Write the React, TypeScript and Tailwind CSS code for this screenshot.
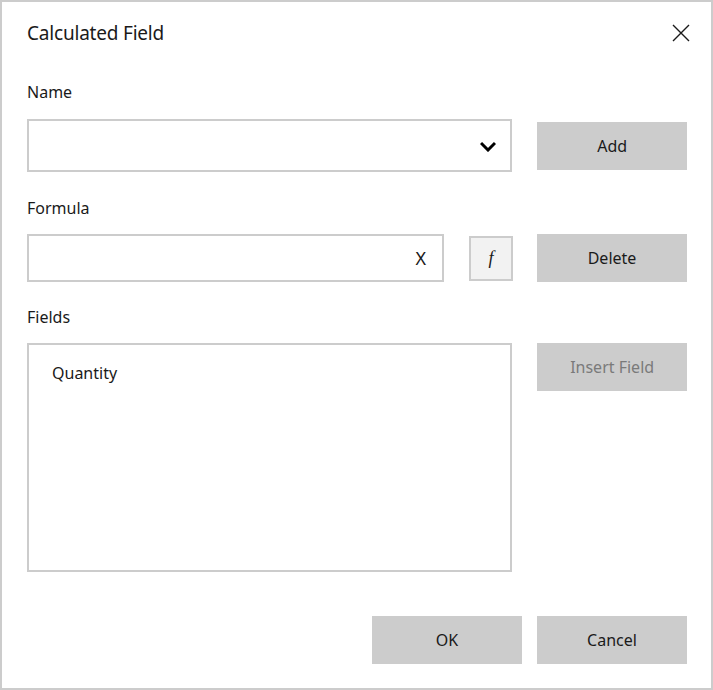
export default function App() {
  const btn =
    "w-[150px] h-[48px] bg-[#cccccc] flex items-center justify-center text-[16px] text-[#1a1a1a]";
  return (
    <div
      className="w-[713px] h-[690px] border-2 border-[#cccccc] bg-white text-[#1a1a1a] flex flex-col"
      style={{ fontFamily: '"Noto Sans", "Open Sans", sans-serif' }}
    >
      {/* Header */}
      <div className="flex items-center justify-between pl-[25px] pr-[20px] h-[62px]">
        <span className="text-[19px] tracking-[-0.2px]">Calculated Field</span>
        <svg width="20" height="20" viewBox="0 0 20 20" stroke="#1a1a1a" strokeWidth="1.4">
          <path d="M2 2 L18 18 M18 2 L2 18" />
        </svg>
      </div>

      <div className="pl-[25px] pr-[24px] flex flex-col">
        <div className="h-[20px] mt-[18px] text-[16px] leading-[20px]">Name</div>
        <div className="flex items-center gap-[25px] mt-[17px]">
          <div className="w-[486px] h-[53px] border-2 border-[#cccccc] flex items-center justify-end pr-[14px]">
            <svg width="16" height="12" viewBox="0 0 16 12">
              <path d="M1 3 L8 10 L15 3" fill="none" stroke="#000" strokeWidth="3" />
            </svg>
          </div>
          <div className={btn}>Add</div>
        </div>

        <div className="h-[20px] mt-[26px] text-[16px] leading-[20px]">Formula</div>
        <div className="flex items-center mt-[16px]">
          <div className="w-[417px] h-[48px] border-2 border-[#cccccc] flex items-center justify-end pr-[16px] text-[18px]">
            X
          </div>
          <div
            className="ml-[25px] w-[44px] h-[45px] border-2 border-[#cccccc] bg-[#f2f2f2] flex items-center justify-center text-[18px] italic"
            style={{ fontFamily: '"Liberation Serif", serif' }}
          >
            f
          </div>
          <div className={`${btn} ml-[24px]`}>Delete</div>
        </div>

        <div className="h-[20px] mt-[25px] text-[16px] leading-[20px]">Fields</div>
        <div className="flex items-start gap-[25px] mt-[16px]">
          <div className="w-[486px] h-[229px] border-2 border-[#cccccc] pt-[16px] pl-[23px] text-[16px]">
            Quantity
          </div>
          <div className={`${btn} text-[#7a7a7a]`}>Insert Field</div>
        </div>

        <div className="flex justify-end gap-[15px] mt-[44px]">
          <div className={btn}>OK</div>
          <div className={btn}>Cancel</div>
        </div>
      </div>
    </div>
  );
}
